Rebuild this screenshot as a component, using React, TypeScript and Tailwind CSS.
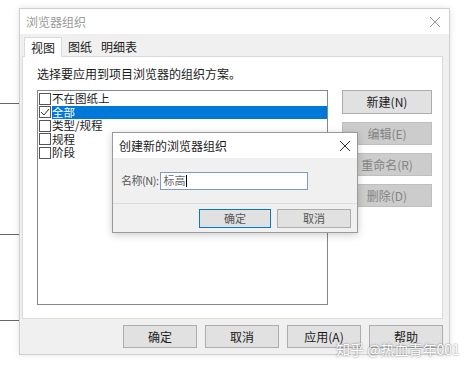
const font = { fontFamily: '"Noto Sans CJK SC", "Noto Sans", sans-serif' }

function CloseX({ className }: { className?: string }) {
  return (
    <svg className={className} width="12" height="12" viewBox="0 0 12 12" fill="none">
      <path d="M1 1L11 11M11 1L1 11" stroke="currentColor" strokeWidth="1" />
    </svg>
  )
}

function CheckBox({ checked }: { checked?: boolean }) {
  return (
    <span className="w-[12px] h-[12px] border border-[#555] bg-white flex items-center justify-center shrink-0">
      {checked && (
        <svg width="10" height="10" viewBox="0 0 10 10" fill="none">
          <path d="M1 5L4 8L9 2" stroke="#333" strokeWidth="1" />
        </svg>
      )}
    </span>
  )
}

const items = [
  { label: '不在图纸上', checked: false },
  { label: '全部', checked: true, selected: true },
  { label: '类型/规程', checked: false },
  { label: '规程', checked: false },
  { label: '阶段', checked: false },
]

export default function App() {
  return (
    <div className="relative w-[474px] h-[366px] bg-white overflow-hidden text-[12px] text-[#1a1a1a]" style={font}>
      {/* lines sticking out on the left */}
      <div className="absolute left-0 top-[103px] w-[19px] h-px bg-[#666]" />
      <div className="absolute left-0 top-[234px] w-[19px] h-px bg-[#666]" />
      <div className="absolute left-0 top-[320px] w-[19px] h-px bg-[#666]" />

      {/* main dialog */}
      <div className="absolute left-[19px] top-[8px] w-[431px] h-[347px] border border-[#cfcfcf] shadow-[0_0_6px_rgba(0,0,0,0.12)] flex flex-col">
        <div className="h-[25px] bg-white flex items-center justify-between pl-[6px] pr-[8px] shrink-0">
          <span className="text-[#9a9a9a]">浏览器组织</span>
          <CloseX className="text-[#9a9a9a]" />
        </div>
        <div className="flex-1 bg-[#f0f0f0] flex flex-col pl-[2px] pr-[6px]">
          {/* tabs */}
          <div className="flex items-end h-[22px] pl-[2px]">
            <div className="h-[20px] w-[38px] bg-white border border-b-0 border-[#dadada] flex items-center justify-center relative top-px z-10">视图</div>
            <div className="h-[18px] w-[36px] flex items-center justify-center">图纸</div>
            <div className="h-[18px] w-[42px] flex items-center justify-center">明细表</div>
          </div>
          {/* panel */}
          <div className="h-[263px] bg-white border border-[#dadada] pl-[14px] pr-[10px] pt-[9px] flex flex-col">
            <div className="h-[16px] leading-[16px]">选择要应用到项目浏览器的组织方案。</div>
            <div className="flex mt-[8px] gap-[14px]">
              <div className="w-[291px] h-[215px] border border-[#828790] bg-white pt-px">
                {items.map((it) => (
                  <div key={it.label} className="h-[13.5px] flex items-center pl-[1px] text-[11.5px]">
                    <CheckBox checked={it.checked} />
                    <span
                      className={
                        it.selected
                          ? 'flex-1 h-[13px] ml-[1px] bg-[#0078d7] text-white leading-[13px]'
                          : 'ml-[1px] leading-[13px]'
                      }
                    >
                      {it.label}
                    </span>
                  </div>
                ))}
              </div>
              <div className="flex flex-col gap-[8px] w-[90px]">
                <div className="h-[24px] bg-[#e1e1e1] border border-[#adadad] flex items-center justify-center">新建(N)</div>
                <div className="h-[23px] bg-[#cccccc] border border-[#bfbfbf] flex items-center justify-center text-[#838383]">编辑(E)</div>
                <div className="h-[23px] bg-[#cccccc] border border-[#bfbfbf] flex items-center justify-center text-[#838383]">重命名(R)</div>
                <div className="h-[23px] bg-[#cccccc] border border-[#bfbfbf] flex items-center justify-center text-[#838383]">删除(D)</div>
              </div>
            </div>
          </div>
          {/* bottom buttons */}
          <div className="flex justify-end gap-[8px] mt-[6px]">
            {['确定', '取消', '应用(A)', '帮助'].map((b) => (
              <div key={b} className="w-[74px] h-[23px] bg-[#e1e1e1] border border-[#adadad] flex items-center justify-center">
                {b}
              </div>
            ))}
          </div>
        </div>
      </div>

      {/* create dialog */}
      <div className="absolute left-[112px] top-[132px] w-[246px] h-[101px] border border-[#9a9a9a] shadow-[0_2px_8px_rgba(0,0,0,0.2)] flex flex-col">
        <div className="h-[25px] bg-white flex items-center justify-between pl-[6px] pr-[6px] shrink-0">
          <span>创建新的浏览器组织</span>
          <CloseX className="text-[#333]" />
        </div>
        <div className="h-[46px] bg-[#f0f0f0] flex items-center pl-[8px] border-b border-[#dcdcdc]">
          <span className="text-[#555] text-[11px] tracking-[-0.5px]">名称(N):</span>
          <div className="ml-[2px] w-[148px] h-[18px] bg-white border border-[#7a9cc6] flex items-center pl-[2px] text-[#666] text-[11px]">
            标高<span className="w-px h-[12px] bg-black ml-px" />
          </div>
        </div>
        <div className="flex-1 bg-[#f0f0f0] flex justify-end items-center gap-[6px] pr-[6px]">
          <div className="w-[72px] h-[19px] bg-[#e1e1e1] border border-[#0078d7] flex items-center justify-center text-[#555] text-[11px]">确定</div>
          <div className="w-[74px] h-[19px] bg-[#e1e1e1] border border-[#adadad] flex items-center justify-center text-[#555] text-[11px]">取消</div>
        </div>
      </div>

      {/* watermark */}
      <div className="absolute left-[336px] top-[339px] text-[14px] text-white [text-shadow:0_0_2px_rgba(0,0,0,0.6)] whitespace-nowrap">
        知乎 @热血青年001
      </div>
    </div>
  )
}
